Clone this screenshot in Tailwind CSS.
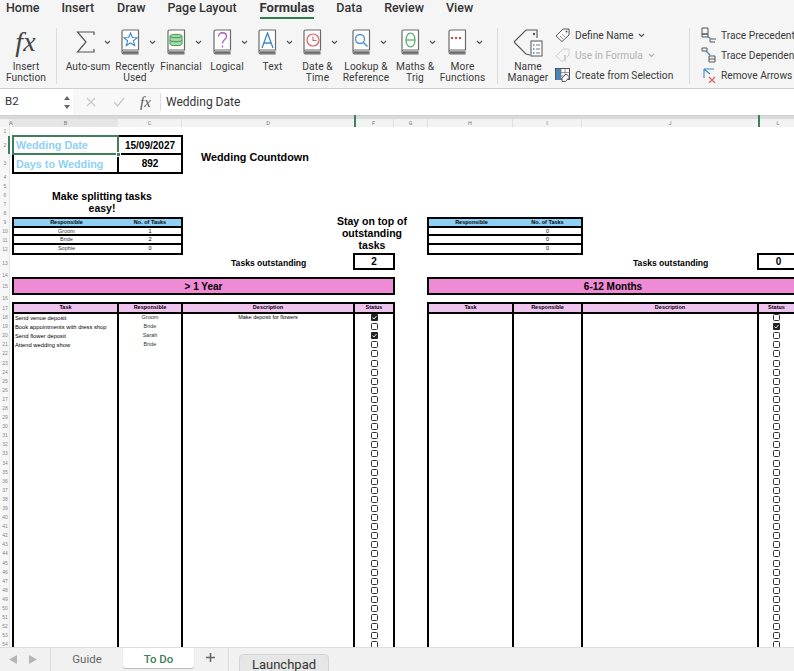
<!DOCTYPE html>
<html lang="en">
  <head>
    <meta charset="UTF-8" />
    <title>Wedding Planner - To Do</title>
    <script src="https://cdn.jsdelivr.net/npm/@tailwindcss/browser@4"></script>
  </head>
  <body class="w-[794px] h-[671px] overflow-hidden flex flex-col bg-[#f5f5f5] font-['Roboto',sans-serif] text-[#2b2b2b]">
    <svg class="hidden">
      <symbol id="book" viewBox="0 0 20 27">
        <path d="M2 23V2.5Q2 1 3.5 1H18.500V21H3.500Q2 21 2 23Q2 25 3.500 25H18.500" fill="#fff" stroke="#6b6b6b" stroke-width="1.200" />
        <path d="M3 23.500H18.500" stroke="#6b6b6b" stroke-width="2.400" />
      </symbol>
      <symbol id="chev" viewBox="0 0 8 6">
        <path d="M1 1.200L4 4.200L7 1.200" fill="none" stroke="#555" stroke-width="1.400" />
      </symbol>
    </svg>

    <!-- tabs -->
    <nav class="h-[20px] shrink-0 flex gap-[22px] pl-[6px] text-[12.500px] leading-[16px] font-medium text-[#333]">
      <span>Home</span>
      <span>Insert</span>
      <span class="ml-[1px]">Draw</span>
      <span>Page Layout</span>
      <span class="relative font-bold text-[13px] ml-[1px]">Formulas<i class="absolute left-0 right-0 top-[17px] h-[2px] bg-[#2f7d4f]"></i></span>
      <span>Data</span>
      <span>Review</span>
      <span>View</span>
    </nav>

    <!-- ribbon -->
    <section class="h-[69px] shrink-0 flex pt-[6px] text-[10.200px] leading-[11px] tracking-[0.1px] text-center text-[#3a3a3a] border-b border-[#cfcfcf]">
      <div class="w-[52px] shrink-0 flex flex-col items-center">
        <div class="h-[34px] font-['Liberation_Serif',serif] italic text-[28px] leading-[32px] text-[#444] pr-[1px]">fx</div>
        <div class="mt-[1px]">Insert<br />Function</div>
      </div>
      <i class="w-px shrink-0 h-[56px] mt-[2px] ml-[4px] mr-[7px] bg-[#dcdcdc]"></i>
      <div class="w-[48px] shrink-0 flex flex-col items-center">
        <div class="h-[34px] flex items-start gap-[9px] pl-[10px] pt-[5px]">
          <svg class="w-[19px] h-[22px]" viewBox="0 0 19 22"><path d="M18 4V1H1.500L10 11L1.500 21H18V18" fill="none" stroke="#555" stroke-width="1.200" /></svg>
          <svg class="w-[7px] h-[5px] mt-[9px]"><use href="#chev" /></svg>
        </div>
        <div class="mt-[1px] whitespace-nowrap">Auto-sum</div>
      </div>
      <div class="w-[46px] shrink-0 flex flex-col items-center">
        <div class="h-[34px] flex items-start gap-[9px] pl-[5px] pt-[3px]">
          <span class="relative w-[20px] h-[27px]"><svg class="w-[20px] h-[27px]"><use href="#book" /></svg><svg class="absolute left-[3px] top-[3px] w-[15px] h-[15px]" viewBox="0 0 15 15"><path d="M7.500 1L9.300 5.500L14 5.800L10.400 8.800L11.600 13.500L7.500 11L3.400 13.500L4.600 8.800L1 5.800L5.700 5.500Z" fill="none" stroke="#3f86c9" stroke-width="1.100" /></svg></span>
          <svg class="w-[7px] h-[5px] mt-[11px]"><use href="#chev" /></svg>
        </div>
        <div class="mt-[1px]">Recently<br />Used</div>
      </div>
      <div class="w-[46px] shrink-0 flex flex-col items-center">
        <div class="h-[34px] flex items-start gap-[9px] pl-[5px] pt-[3px]">
          <span class="relative w-[20px] h-[27px]"><svg class="w-[20px] h-[27px]"><use href="#book" /></svg><svg class="absolute left-[3.500px] top-[4px] w-[14px] h-[14px]" viewBox="0 0 14 14"><path d="M1 3C1 .8 13 .8 13 3V11C13 13.200 1 13.200 1 11Z" fill="#a9d8a8" stroke="#3d9a54" /><path d="M1 3C1 5.200 13 5.200 13 3M1 7C1 9.200 13 9.200 13 7" fill="none" stroke="#3d9a54" /></svg></span>
          <svg class="w-[7px] h-[5px] mt-[11px]"><use href="#chev" /></svg>
        </div>
        <div class="mt-[1px]">Financial</div>
      </div>
      <div class="w-[46px] shrink-0 flex flex-col items-center">
        <div class="h-[34px] flex items-start gap-[9px] pl-[5px] pt-[3px]">
          <span class="relative w-[20px] h-[27px]"><svg class="w-[20px] h-[27px]"><use href="#book" /></svg><svg class="absolute left-[5px] top-[3px] w-[11px] h-[17px]" viewBox="0 0 11 17"><path d="M1.500 4.500C1.500 -.5 9.500 -.5 9.500 4.500C9.500 7.500 5.500 7.500 5.500 11.500M5.500 13.500V15.500" fill="none" stroke="#a45cc4" stroke-width="1.300" /></svg></span>
          <svg class="w-[7px] h-[5px] mt-[11px]"><use href="#chev" /></svg>
        </div>
        <div class="mt-[1px]">Logical</div>
      </div>
      <div class="w-[45px] shrink-0 flex flex-col items-center">
        <div class="h-[34px] flex items-start gap-[9px] pl-[5px] pt-[3px]">
          <span class="relative w-[20px] h-[27px]"><svg class="w-[20px] h-[27px]"><use href="#book" /></svg><svg class="absolute left-[4px] top-[3px] w-[13px] h-[17px]" viewBox="0 0 13 17"><path d="M1 16L6.500 1L12 16M3 11H10" fill="none" stroke="#3f86c9" stroke-width="1.300" /></svg></span>
          <svg class="w-[7px] h-[5px] mt-[11px]"><use href="#chev" /></svg>
        </div>
        <div class="mt-[1px]">Text</div>
      </div>
      <div class="w-[45px] shrink-0 flex flex-col items-center">
        <div class="h-[34px] flex items-start gap-[9px] pl-[5px] pt-[3px]">
          <span class="relative w-[20px] h-[27px]"><svg class="w-[20px] h-[27px]"><use href="#book" /></svg><svg class="absolute left-[3.500px] top-[3.500px] w-[14px] h-[14px]" viewBox="0 0 14 14"><circle cx="7" cy="7" r="6" fill="none" stroke="#d9605c" stroke-width="1.200" /><path d="M7 3.500V7.500H10.500" fill="none" stroke="#d9605c" stroke-width="1.100" /></svg></span>
          <svg class="w-[7px] h-[5px] mt-[11px]"><use href="#chev" /></svg>
        </div>
        <div class="mt-[1px]">Date &amp;<br />Time</div>
      </div>
      <div class="w-[52px] shrink-0 flex flex-col items-center">
        <div class="h-[34px] flex items-start gap-[9px] pl-[5px] pt-[3px]">
          <span class="relative w-[20px] h-[27px]"><svg class="w-[20px] h-[27px]"><use href="#book" /></svg><svg class="absolute left-[3.500px] top-[3.500px] w-[14px] h-[14px]" viewBox="0 0 14 14"><circle cx="6" cy="6" r="4.500" fill="none" stroke="#4a8fd0" stroke-width="1.300" /><path d="M9.500 9.500L13.500 13.500" stroke="#4a8fd0" stroke-width="1.500" /></svg></span>
          <svg class="w-[7px] h-[5px] mt-[11px]"><use href="#chev" /></svg>
        </div>
        <div class="mt-[1px] whitespace-nowrap">Lookup &amp;<br />Reference</div>
      </div>
      <div class="w-[46px] shrink-0 flex flex-col items-center">
        <div class="h-[34px] flex items-start gap-[9px] pl-[5px] pt-[3px]">
          <span class="relative w-[20px] h-[27px]"><svg class="w-[20px] h-[27px]"><use href="#book" /></svg><svg class="absolute left-[5px] top-[3px] w-[11px] h-[16px]" viewBox="0 0 11 16"><ellipse cx="5.500" cy="8" rx="4.500" ry="7" fill="none" stroke="#4aa866" stroke-width="1.200" /><path d="M1 8H10" stroke="#4aa866" stroke-width="1.200" /></svg></span>
          <svg class="w-[7px] h-[5px] mt-[11px]"><use href="#chev" /></svg>
        </div>
        <div class="mt-[1px]">Maths &amp;<br />Trig</div>
      </div>
      <div class="w-[49px] shrink-0 flex flex-col items-center">
        <div class="h-[34px] flex items-start gap-[9px] pl-[5px] pt-[3px]">
          <span class="relative w-[20px] h-[27px]"><svg class="w-[20px] h-[27px]"><use href="#book" /></svg><span class="absolute left-[4px] top-[8px] flex gap-[2px]"><i class="w-[2px] h-[2px] bg-[#d8423c]"></i><i class="w-[2px] h-[2px] bg-[#d8423c]"></i><i class="w-[2px] h-[2px] bg-[#d8423c]"></i></span></span>
          <svg class="w-[7px] h-[5px] mt-[11px]"><use href="#chev" /></svg>
        </div>
        <div class="mt-[1px]">More<br />Functions</div>
      </div>
      <i class="w-px shrink-0 h-[56px] mt-[2px] ml-[10px] mr-[7px] bg-[#dcdcdc]"></i>
      <div class="w-[46px] shrink-0 flex flex-col items-center">
        <div class="h-[34px] pt-[3px]">
          <svg class="w-[30px] h-[29px]" viewBox="0 0 30 29">
            <path d="M1 13L13 1H24V9M17 26L13 25L1 13" fill="none" stroke="#555" stroke-width="1.100" />
            <circle cx="21" cy="5" r="1.200" fill="#555" />
            <rect x="18" y="12" width="11" height="15" fill="#fff" stroke="#555" />
            <path d="M20 16H21.500M20 20H21.500M20 24H21.500" stroke="#3f86c9" stroke-width="1.600" />
            <path d="M23 16H27M23 20H27M23 24H27" stroke="#777" />
          </svg>
        </div>
        <div class="mt-[1px]">Name<br />Manager</div>
      </div>
      <div class="w-[134px] shrink-0 ml-[4px] flex flex-col gap-[6px] pt-[1px] text-left whitespace-nowrap tracking-normal">
        <div class="h-[14px] flex items-center mt-[1px]">
          <svg class="w-[15px] h-[14px]" viewBox="0 0 15 14"><path d="M1 8L8 1H14V7L7 13.500Z" fill="#fff" stroke="#555" /><path d="M5 8L8.500 11.500M7 6L10.500 9.500" stroke="#999" /><circle cx="11.500" cy="3.500" r="1" fill="#555" /></svg>
          <span class="ml-[5px]">Define Name</span>
          <svg class="w-[7px] h-[5px] ml-[5px]"><use href="#chev" /></svg>
        </div>
        <div class="h-[14px] flex items-center text-[#b3b3b3]">
          <svg class="w-[15px] h-[14px]" viewBox="0 0 15 14"><path d="M1 8L8 1H14V7L7 13.500Z" fill="none" stroke="#cfcfcf" /><path d="M10 7V13" stroke="#cfcfcf" stroke-width="2" /></svg>
          <span class="ml-[5px]">Use in Formula</span>
          <svg class="w-[7px] h-[5px] ml-[5px] opacity-40"><use href="#chev" /></svg>
        </div>
        <div class="h-[14px] flex items-center">
          <svg class="w-[15px] h-[14px]" viewBox="0 0 15 14"><rect x=".5" y=".5" width="14" height="11" fill="#fff" stroke="#555" /><rect x="1" y="1" width="5" height="11" fill="#3f86c9" /><path d="M1 4.500H14M1 8H10M6 1V12M10 1V8" stroke="#777" stroke-width=".7" /><path d="M7 10L11 6L14.500 9L10.500 13.500H7Z" fill="#fff" stroke="#555" /></svg>
          <span class="ml-[5px]">Create from Selection</span>
        </div>
      </div>
      <i class="w-px shrink-0 h-[56px] mt-[2px] mr-[11px] bg-[#dcdcdc]"></i>
      <div class="shrink-0 flex flex-col gap-[6px] pt-[1px] text-left whitespace-nowrap tracking-normal">
        <div class="h-[14px] flex items-center mt-[1px]">
          <svg class="w-[15px] h-[16px] shrink-0" viewBox="0 0 15 16"><path d="M1 1H7V7H1ZM1 7H7V10H1ZM10 12H15M9 12V15H14" fill="none" stroke="#555" /><path d="M6 9L10 12" stroke="#3f86c9" stroke-width="1.200" /></svg>
          <span class="ml-[5px]">Trace Precedents</span>
        </div>
        <div class="h-[14px] flex items-center">
          <svg class="w-[15px] h-[16px] shrink-0" viewBox="0 0 15 16"><path d="M1 1H6V4H1ZM8 9H14V15H8ZM8 12H14" fill="none" stroke="#555" /><path d="M5 4L9 8" stroke="#3f86c9" stroke-width="1.200" /></svg>
          <span class="ml-[5px]">Trace Dependents</span>
        </div>
        <div class="h-[14px] flex items-center">
          <svg class="w-[15px] h-[15px] shrink-0" viewBox="0 0 15 15"><path d="M3 1H13M3 1V10M3 1L9 6" fill="none" stroke="#3f86c9" stroke-width="1.100" /><path d="M8 9L14 15M14 9L8 15" stroke="#d9605c" stroke-width="1.200" /></svg>
          <span class="ml-[5px]">Remove Arrows</span>
        </div>
      </div>
    </section>

    <!-- formula bar -->
    <section class="h-[26px] shrink-0 flex items-center bg-white text-[#333]">
      <div class="w-[73px] h-full flex items-center justify-between pl-[5px] pr-[3px] text-[11.500px]">
        <span>B2</span>
        <svg class="w-[6px] h-[13px]" viewBox="0 0 6 13"><path d="M3 0L6 4H0ZM3 13L0 9H6Z" fill="#666" /></svg>
      </div>
      <div class="w-[87px] h-full flex items-center bg-[#f8f8f8] pl-[13px] gap-[17px]">
        <svg class="w-[10px] h-[10px]" viewBox="0 0 10 10"><path d="M1 1L9 9M9 1L1 9" stroke="#c9c9c9" stroke-width="1.300" /></svg>
        <svg class="w-[12px] h-[10px]" viewBox="0 0 12 10"><path d="M1 5L4.500 9L11 1" fill="none" stroke="#c9c9c9" stroke-width="1.300" /></svg>
        <span class="font-['Liberation_Serif',serif] italic text-[15px] -ml-[2px] text-[#555]">fx</span>
      </div>
      <div class="flex-1 h-[18px] border-l border-[#ddd] pl-[5px] text-[12px] leading-[18px]">Wedding Date</div>
    </section>
    <div class="h-[4px] shrink-0 bg-[#d9d9d9] border-t border-[#cfcfcf]"></div>

    <!-- column letters -->
    <div class="h-[8px] shrink-0 bg-[#f3f3f3] grid grid-cols-[10px_3px_105px_64px_172px_40px_34px_85px_69px_176px_40px] text-[5.500px] leading-[8px] text-center text-[#777]">
      <span class="border-r border-[#ddd]"></span>
      <span class="border-r border-[#ddd] -ml-[1px]">A</span>
      <span class="border-b-2 border-[#3f7f5a] bg-[#e6e6e6]">B</span>
      <span class="border-r border-[#e0e0e0]">C</span>
      <span class="relative">D<i class="absolute right-[-2px] top-[-4px] bottom-0 w-[2px] bg-[#3f7f5a]"></i></span>
      <span class="border-r border-[#e0e0e0]">F</span>
      <span class="border-r border-[#e0e0e0]">G</span>
      <span class="border-r border-[#e0e0e0]">H</span>
      <span class="border-r border-[#e0e0e0]">I</span>
      <span class="relative">J<i class="absolute right-[-2px] top-[-4px] bottom-0 w-[2px] bg-[#3f7f5a]"></i></span>
      <span>L</span>
    </div>

    <!-- sheet -->
    <main class="flex-1 min-h-0 overflow-hidden bg-white relative">
      <div id="sheet" class="w-[838px] grid grid-cols-[10px_3px_105px_64px_172px_40px_34px_85px_69px_176px_44px] grid-rows-[9px_18px_19px_9px_9px_9px_9px_9px_9px_9px_9px_9px_18px_6px_16px_9px_10px_repeat(37,9.1px)] font-['Liberation_Sans',sans-serif] text-black">
        <div class="col-start-1 row-start-1 row-span-[54] bg-[#f7f7f7] border-r border-[#e3e3e3]"></div>
        <i class="col-start-1 row-start-2 justify-self-end w-[2px] bg-[#3f7f5a] z-20"></i>

        <!-- countdown -->
        <div class="col-start-3 row-start-2 -m-px border-2 border-[#3f7f5a] z-10 relative flex items-center pl-[2px] pt-[1px] text-[10.800px] font-bold text-[#8fd0f5] whitespace-nowrap">Wedding Date<i class="absolute right-[-4px] bottom-[-4px] w-[5px] h-[5px] bg-[#3f7f5a] border border-white"></i></div>
        <div class="col-start-4 row-start-2 -m-px border-2 border-black flex items-center justify-center text-[10px] font-bold">15/09/2027</div>
        <div class="col-start-3 row-start-3 -m-px border-2 border-black flex items-center pl-[2px] pt-[1px] text-[10.800px] font-bold text-[#8fd0f5] whitespace-nowrap">Days to Wedding</div>
        <div class="col-start-4 row-start-3 -m-px border-2 border-black flex items-center justify-center text-[10px] font-bold">892</div>
        <div class="col-start-5 row-start-2 row-span-2 flex items-center pl-[19px] pt-[6px] text-[10.800px] font-bold whitespace-nowrap">Wedding Countdown</div>

        <div class="col-start-3 col-span-2 row-start-5 row-span-4 flex items-center justify-center pl-[9px] pt-[3px] text-center text-[10.500px] leading-[12px] font-bold"><span class="w-[110px]">Make splitting tasks easy!</span></div>

        <!-- left splitting table -->
        <div class="col-start-3 col-span-2 row-start-9 row-span-4 -m-px border-2 border-black grid grid-cols-[105px_1fr] grid-rows-4 text-[5.500px] leading-[7px] text-center">
          <b class="bg-[#8fd0f5] border-b-2 border-black">Responsible</b><b class="bg-[#8fd0f5] border-b-2 border-black">No. of Tasks</b>
          <span class="border-b-2 border-black text-[#333]">Groom</span><span class="border-b-2 border-black">1</span>
          <span class="border-b-2 border-black text-[#333]">Bride</span><span class="border-b-2 border-black">2</span>
          <span class="text-[#333]">Sophie</span><span>0</span>
        </div>

        <div class="col-start-5 col-span-3 row-start-8 row-span-6 flex justify-center pl-[134px] pt-[6px] text-center text-[10.500px] leading-[12px] font-bold"><span class="w-[76px] shrink-0">Stay on top of outstanding tasks</span></div>
        <div class="col-start-5 row-start-13 flex items-center pl-[49px] pt-[1px] text-[8.600px] font-bold whitespace-nowrap">Tasks outstanding</div>
        <div class="col-start-6 row-start-13 -m-px mb-[2px] border-2 border-black flex items-center justify-center text-[10px] font-bold">2</div>
        <div class="col-start-3 col-span-4 row-start-15 -m-px border-2 border-black bg-[#ef8ad4] flex items-center justify-center pt-[1px] text-[10px] font-bold">&gt; 1 Year</div>

        <!-- right splitting table -->
        <div class="col-start-8 col-span-2 row-start-9 row-span-4 -m-px border-2 border-black grid grid-cols-[85px_1fr] grid-rows-4 text-[5.500px] leading-[7px] text-center">
          <b class="bg-[#8fd0f5] border-b-2 border-black">Responsible</b><b class="bg-[#8fd0f5] border-b-2 border-black">No. of Tasks</b>
          <span class="border-b-2 border-black"></span><span class="border-b-2 border-black">0</span>
          <span class="border-b-2 border-black"></span><span class="border-b-2 border-black">0</span>
          <span></span><span>0</span>
        </div>
        <div class="col-start-10 row-start-13 flex items-center pl-[51px] pt-[1px] text-[8.600px] font-bold whitespace-nowrap">Tasks outstanding</div>
        <div class="col-start-11 row-start-13 -m-px mb-[2px] border-2 border-black flex items-center justify-center pr-[3px] text-[10px] font-bold">0</div>
        <div class="col-start-8 col-span-4 row-start-15 -m-px border-2 border-black bg-[#ef8ad4] flex items-center justify-center pt-[1px] pr-[4px] text-[10px] font-bold">6-12 Months</div>

        <!-- left list -->
        <b class="col-start-3 row-start-17 -m-px border-2 border-black bg-[#eec4ee] text-[5.500px] leading-[7px] text-center">Task</b>
        <b class="col-start-4 row-start-17 -m-px border-2 border-black bg-[#eec4ee] text-[5.500px] leading-[7px] text-center">Responsible</b>
        <b class="col-start-5 row-start-17 -m-px border-2 border-black bg-[#eec4ee] text-[5.500px] leading-[7px] text-center">Description</b>
        <b class="col-start-6 row-start-17 -m-px border-2 border-black bg-[#eec4ee] text-[5.500px] leading-[7px] text-center">Status</b>
        <div class="col-start-3 row-start-18 row-span-[37] -m-px border-2 border-black"></div>
        <div class="col-start-4 row-start-18 row-span-[37] -m-px border-2 border-black"></div>
        <div class="col-start-5 row-start-18 row-span-[37] -m-px border-2 border-black"></div>
        <div class="col-start-6 row-start-18 row-span-[37] -m-px border-2 border-black"></div>

        <span class="col-start-3 row-start-18 pl-[2px] pt-[2px] text-[5.800px] leading-[7px] whitespace-nowrap">Send venue deposit</span>
        <span class="col-start-3 row-start-19 pl-[2px] pt-[2px] text-[5.800px] leading-[7px] whitespace-nowrap">Book appointments with dress shop</span>
        <span class="col-start-3 row-start-20 pl-[2px] pt-[2px] text-[5.800px] leading-[7px] whitespace-nowrap">Send flower deposit</span>
        <span class="col-start-3 row-start-21 pl-[2px] pt-[2px] text-[5.800px] leading-[7px] whitespace-nowrap">Attend wedding show</span>
        <span class="col-start-4 row-start-18 pt-[1px] text-center text-[5.500px] leading-[7px] text-[#333]">Groom</span>
        <span class="col-start-4 row-start-19 pt-[1px] text-center text-[5.500px] leading-[7px] text-[#333]">Bride</span>
        <span class="col-start-4 row-start-20 pt-[1px] text-center text-[5.500px] leading-[7px] text-[#333]">Sarah</span>
        <span class="col-start-4 row-start-21 pt-[1px] text-center text-[5.500px] leading-[7px] text-[#333]">Bride</span>
        <span class="col-start-5 row-start-18 pt-[1px] text-center text-[5.500px] leading-[7px]">Make deposit for flowers</span>

        <!-- right list -->
        <b class="col-start-8 row-start-17 -m-px border-2 border-black bg-[#eec4ee] text-[5.500px] leading-[7px] text-center">Task</b>
        <b class="col-start-9 row-start-17 -m-px border-2 border-black bg-[#eec4ee] text-[5.500px] leading-[7px] text-center">Responsible</b>
        <b class="col-start-10 row-start-17 -m-px border-2 border-black bg-[#eec4ee] text-[5.500px] leading-[7px] text-center">Description</b>
        <b class="col-start-11 row-start-17 -m-px border-2 border-black bg-[#eec4ee] text-[5.500px] leading-[7px] text-center pr-[7px]">Status</b>
        <div class="col-start-8 row-start-18 row-span-[37] -m-px border-2 border-black"></div>
        <div class="col-start-9 row-start-18 row-span-[37] -m-px border-2 border-black"></div>
        <div class="col-start-10 row-start-18 row-span-[37] -m-px border-2 border-black"></div>
        <div class="col-start-11 row-start-18 row-span-[37] -m-px border-2 border-black"></div>
      </div>
    </main>

    <!-- sheet tabs -->
    <footer class="h-[24px] shrink-0 flex bg-[#f1f1f1] border-t border-[#dcdcdc] text-[11.500px] text-[#666]">
      <div class="w-[51px] h-full flex items-center gap-[12px] pl-[9px] border-r border-[#ddd]">
        <svg class="w-[8px] h-[9px]" viewBox="0 0 8 9"><path d="M8 0V9L0 4.500Z" fill="#b5b5b5" /></svg>
        <svg class="w-[8px] h-[9px]" viewBox="0 0 8 9"><path d="M0 0V9L8 4.500Z" fill="#b5b5b5" /></svg>
      </div>
      <div class="w-[72px] text-center leading-[23px]">Guide</div>
      <div class="w-[71px] h-[20px] bg-white rounded-b-[3px] shadow-[0_1px_1px_#bbb] text-center leading-[23px] font-medium text-[#3f7f5a]">To Do</div>
      <div class="w-[35px] h-full border-r border-[#ddd] flex justify-center pt-[4px] pr-[1px]">
        <svg class="w-[11px] h-[11px]" viewBox="0 0 11 11"><path d="M5.500 1V10M1 5.500H10" stroke="#666" stroke-width="1.600" /></svg>
      </div>
      <div class="ml-[10px] mt-[6px] w-[90px] h-[20px] bg-[#e6e6e6] border border-[#d4d4d4] rounded-t-[4px] text-center text-[13px] leading-[20px] text-[#333]">Launchpad</div>
    </footer>

    <script>
      const sheet = document.getElementById('sheet');

      // row numbers down the side
      for (let r = 1; r <= 54; r++) {
        const n = document.createElement('span');
        n.className = 'col-start-1 text-[5px] text-center text-[#888] self-center leading-[7px] z-10';
        n.style.gridRow = r;
        n.textContent = r;
        sheet.appendChild(n);
      }

      // status checkboxes, rows 18-54
      const ticked = { 6: [18, 20], 11: [19] };
      [6, 11].forEach((col) => {
        for (let r = 18; r <= 54; r++) {
          const wrap = document.createElement('div');
          wrap.className = col === 6 ? 'flex items-center justify-center' : 'flex items-center justify-start pl-[15px]';
          wrap.style.gridColumn = col;
          wrap.style.gridRow = r;
          const on = ticked[col].includes(r);
          wrap.innerHTML = on
            ? '<svg class="w-[7px] h-[7px]" viewBox="0 0 7 7"><rect width="7" height="7" rx="1" fill="#222"/><path d="M1.500 3.500L3 5L5.500 2" fill="none" stroke="#fff" stroke-width=".9"/></svg>'
            : '<i class="block w-[7px] h-[7px] border border-[#333] rounded-[1.500px] bg-white"></i>';
          sheet.appendChild(wrap);
        }
      });
    </script>
  </body>
</html>
